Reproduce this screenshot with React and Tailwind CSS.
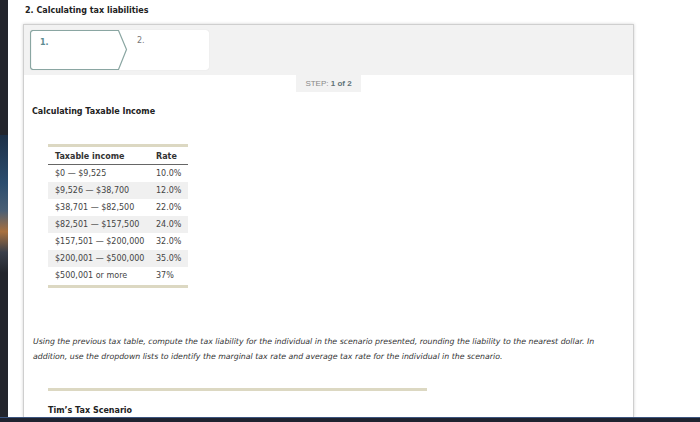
import React from "react";

const rows = [
  ["$0 — $9,525", "10.0%"],
  ["$9,526 — $38,700", "12.0%"],
  ["$38,701 — $82,500", "22.0%"],
  ["$82,501 — $157,500", "24.0%"],
  ["$157,501 — $200,000", "32.0%"],
  ["$200,001 — $500,000", "35.0%"],
  ["$500,001 or more", "37%"],
];

const StepTab = () => (
  <div className="relative w-[98px] h-[40px] shrink-0">
    <svg className="absolute inset-0" width="98" height="40" viewBox="0 0 98 40">
      <path
        d="M3.5 0.5 H88.5 L96.5 19.5 L88.5 39.5 H3.5 Q0.5 39.5 0.5 36.5 V3.5 Q0.5 0.5 3.5 0.5 Z"
        fill="white"
        stroke="#8aa6a2"
        strokeWidth="1.2"
      />
    </svg>
    <span className="relative block pl-[10px] pt-[8px] text-[8px] leading-[10px] text-[#5b8c92] font-bold">1.</span>
  </div>
);

export default function App() {
  return (
    <div className="w-[700px] h-[422px] bg-white flex flex-col overflow-hidden font-['DejaVu_Sans',sans-serif]">
      <div className="flex flex-1 min-h-0">
        <div className="w-[8px] shrink-0 flex flex-col bg-[#23252c]">
          <div className="h-[135px]" />
          <div className="h-[138px] bg-[linear-gradient(180deg,#1d3047_0%,#2c4d6e_35%,#4a5f75_55%,#a8703f_70%,#3a3f4a_85%,#23252c_100%)]" />
        </div>
        <div className="flex-1 min-w-0 pl-[15px] flex flex-col">
          <div className="pl-[2px] pt-[6px] h-[20px] text-[8px] font-bold text-[#222] leading-[10px]">
            2. Calculating tax liabilities
          </div>
          <div className="mt-[4px] w-[611px] flex-1 border border-[#cfcfcf] border-b-0 shadow-[0_0_3px_rgba(0,0,0,0.18)] flex flex-col">
            <div className="h-[50px] bg-[#f2f2f2] px-[6px] pt-[5px]">
              <div className="w-[179px] h-[40px] bg-white rounded-[3px] shadow-[0_0_1px_rgba(0,0,0,0.15)] flex">
                <StepTab />
                <span className="pl-[9px] pt-[6px] text-[8px] leading-[10px] text-[#777]">2.</span>
              </div>
            </div>
            <div className="flex justify-center">
              <div className="w-[65px] h-[17px] bg-[#f2f2f2] flex items-center justify-center text-[8px] font-['Liberation_Sans',sans-serif] text-[#888]">
                STEP:&nbsp;<span className="font-bold text-[#5f7378]">1 of 2</span>
              </div>
            </div>
            <div className="pl-[8px] pt-[15px] text-[8px] leading-[10px] font-bold text-[#222]">
              Calculating Taxable Income
            </div>
            <div className="pl-[24px] pt-[27px]">
              <div className="w-[140px] border-t-[3px] border-b-[3px] border-[#dcd8c2]">
                <div className="flex h-[18px] items-center pt-[2px] border-b border-[#666] text-[8px] font-bold text-[#333]">
                  <span className="pl-[7px] w-[108px]">Taxable income</span>
                  <span>Rate</span>
                </div>
                {rows.map((r, i) => (
                  <div
                    key={i}
                    className={`flex h-[17px] items-center text-[8px] text-[#444] ${i % 2 === 1 ? "bg-[#f0f0f0]" : ""}`}
                  >
                    <span className="pl-[7px] w-[108px]">{r[0]}</span>
                    <span>{r[1]}</span>
                  </div>
                ))}
                <div className="h-[1px]" />
              </div>
            </div>
            <div className="pl-[9px] pt-[46px] w-[600px] text-[7.8px] italic text-[#333] leading-[15px]">
              Using the previous tax table, compute the tax liability for the individual in the scenario presented, rounding the liability to the nearest dollar. In addition, use the dropdown lists to identify the marginal tax rate and average tax rate for the individual in the scenario.
            </div>
            <div className="ml-[24px] mt-[24px] w-[379px] h-[3px] bg-[#dcd8c2]" />
            <div className="pl-[24px] pt-[15px] text-[8px] leading-[10px] font-bold text-[#222]">
              Tim’s Tax Scenario
            </div>
          </div>
        </div>
      </div>
      <div className="h-[5px] shrink-0 bg-[#1f2330] border-t border-[#3c5580]" />
    </div>
  );
}
